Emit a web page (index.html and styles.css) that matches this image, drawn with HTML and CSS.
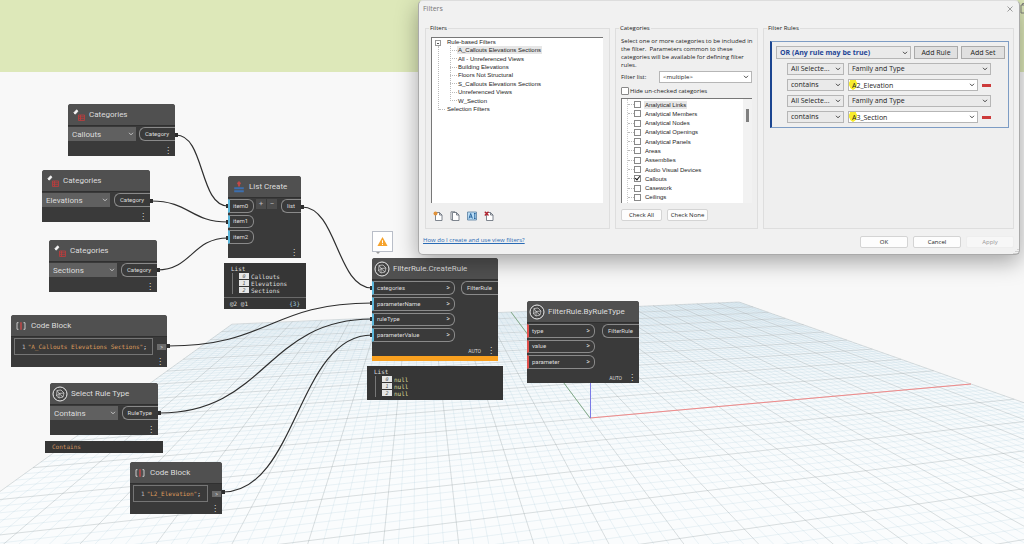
FILE: index.html
```html
<!DOCTYPE html>
<html lang="en">
<head>
<meta charset="utf-8">
<title>Filters</title>
<link rel="stylesheet" href="styles.css">
</head>
<body>
<main class="workspace">
  <div class="swatch"></div>
  <svg class="scene" id="grid" aria-hidden="true">
    <defs>
      <linearGradient id="floor" gradientUnits="userSpaceOnUse" x1="0" y1="302" x2="0" y2="480">
        <stop offset="0" stop-color="#ebf2f7"/><stop offset="0.5" stop-color="#f5f9fb"/><stop offset="1" stop-color="#fafcfd"/>
      </linearGradient>
    </defs>
  </svg>
  <svg class="scene wires" aria-hidden="true">
    <path d="M176 135C205 135 199 206 228 206M151 201C190 201 190 222 228 222M157 270C192 270 192 238 228 238M302 207C337 207 337 288 372 288M168 346C270 346 270 303 372 303M160 413C266 413 266 319 372 319M223 492C297 492 297 335 372 335"/>
    <path class="pins" d="M175 133h3v4h-3zM150 199h3v4h-3zM157 268h3v4h-3zM301 205h3v4h-3zM167 344h3v4h-3zM158 411h3v4h-3zM222 490h3v4h-3zM226 204h3v4h-3zM226 220h3v4h-3zM226 236h3v4h-3zM370 286h3v4h-3zM370 301h3v4h-3zM370 317h3v4h-3zM370 333h3v4h-3z"/>
  </svg>

  <svg width="0" height="0" class="defs" aria-hidden="true">
    <symbol id="i-cat" viewBox="0 0 12 12"><path d="M.8 3.800 3.600.8 5 2.200 2.200 5.200z" fill="#f8f8f8" stroke="#f8f8f8" stroke-width=".8"/><path d="M5.500 6h6v5.500h-6zM5.500 7.800h6M5.500 9.700h6M7.500 6v5.500" stroke="#c03c3c" stroke-width=".8" fill="none"/></symbol>
    <symbol id="i-code" viewBox="0 0 10 8"><path d="M2.500 .7H1v6.600h1.500M7.500 .7H9v6.600H7.500" stroke="#d5d5d5" stroke-width=".9" fill="none"/><path d="M5 .3v7.400" stroke="#e04545" stroke-width="1.200"/></symbol>
    <symbol id="i-dyn" viewBox="0 0 16 16"><circle cx="8" cy="8" r="7" fill="#454545" stroke="#eee" stroke-width="1"/><path d="M5 4.500 9 4l3 3-1 4-4 1-2.500-2zM5 4.500l2 3 5-.5M7 7.500l0 4.500M7 7.500 11 11M4.500 10 7 7.500" fill="none" stroke="#ddd" stroke-width=".7"/></symbol>
    <symbol id="i-list" viewBox="0 0 10 10"><path d="M5 .5v4M3.500 2h3" stroke="#c64848" stroke-width="1.500"/><path d="M1 6h8M1 8.500h8" stroke="#3d6fae" stroke-width="1.600"/></symbol>
    <symbol id="i-down" viewBox="0 0 6 4"><path d="M1 .8 3 2.800 5 .8" fill="none" stroke="currentColor" stroke-width=".8"/></symbol>
    <symbol id="i-page" viewBox="0 0 10 10"><path d="M2.500 1.500h4l2.500 2.500v5.500H2.500zM6.500 1.500V4H9" fill="#fff" stroke="#606873" stroke-width=".8"/></symbol>
  </svg>

  <section class="node n-callouts">
    <header><svg class="ico"><use href="#i-cat"/></svg><h2>Categories</h2></header>
    <div class="row"><label class="pick"><select aria-label="Callouts category"><option>Callouts</option></select><svg><use href="#i-down"/></svg></label><span class="port out">Category</span></div>
    <footer><b>⋮</b></footer>
  </section>
  <section class="node n-elevations">
    <header><svg class="ico"><use href="#i-cat"/></svg><h2>Categories</h2></header>
    <div class="row"><label class="pick"><select aria-label="Elevations category"><option>Elevations</option></select><svg><use href="#i-down"/></svg></label><span class="port out">Category</span></div>
    <footer><b>⋮</b></footer>
  </section>
  <section class="node n-sections">
    <header><svg class="ico"><use href="#i-cat"/></svg><h2>Categories</h2></header>
    <div class="row"><label class="pick"><select aria-label="Sections category"><option>Sections</option></select><svg><use href="#i-down"/></svg></label><span class="port out">Category</span></div>
    <footer><b>⋮</b></footer>
  </section>

  <section class="node n-list">
    <header><svg class="ico"><use href="#i-list"/></svg><h2>List Create</h2></header>
    <div class="row">
      <div class="ins"><span class="port in">item0</span><span class="port in">item1</span><span class="port in">item2</span></div>
      <div class="steps"><button aria-label="Add item">+</button><button aria-label="Remove item">−</button></div>
      <span class="port out">list</span>
    </div>
    <footer><b>⋮</b></footer>
  </section>
  <aside class="preview p-list">
    <p>List</p>
    <ol><li><i>0</i>Callouts</li><li><i>1</i>Elevations</li><li><i>2</i>Sections</li></ol>
    <div class="foot"><span>@2 @1</span><em>{3}</em></div>
  </aside>

  <section class="node n-code1">
    <header><svg class="ico"><use href="#i-code"/></svg><h2>Code Block</h2></header>
    <div class="row code"><code><i>1</i><span>"A_Callouts Elevations Sections"</span>;</code><button class="go" aria-label="Output">&gt;</button></div>
    <footer><b>⋮</b></footer>
  </section>
  <section class="node n-rule dyn">
    <header><svg class="ico"><use href="#i-dyn"/></svg><h2>Select Rule Type</h2></header>
    <div class="row"><label class="pick"><select aria-label="Rule type"><option>Contains</option></select><svg><use href="#i-down"/></svg></label><span class="port out">RuleType</span></div>
    <footer><b>⋮</b></footer>
  </section>
  <aside class="preview p-rule">Contains</aside>
  <section class="node n-code2">
    <header><svg class="ico"><use href="#i-code"/></svg><h2>Code Block</h2></header>
    <div class="row code"><code><i>1</i><span>"L2_Elevation"</span>;</code><button class="go" aria-label="Output">&gt;</button></div>
    <footer><b>⋮</b></footer>
  </section>

  <div class="warn"><svg viewBox="0 0 12 12"><path d="M6 1 11.500 11H.5z" fill="#f6a32c"/><path d="M6 4.500v3.500M6 8.800v1" stroke="#fff" stroke-width="1.100"/></svg></div>
  <section class="node n-create dyn">
    <header><svg class="ico"><use href="#i-dyn"/></svg><h2>FilterRule.CreateRule</h2></header>
    <div class="row">
      <div class="ins"><span class="port in">categories<b>&gt;</b></span><span class="port in">parameterName<b>&gt;</b></span><span class="port in">ruleType<b>&gt;</b></span><span class="port in">parameterValue<b>&gt;</b></span></div>
      <span class="port out">FilterRule</span>
    </div>
    <footer><span>AUTO</span><b>⋮</b></footer>
  </section>
  <aside class="preview p-create">
    <p>List</p>
    <ol class="nulls"><li><i>0</i>null</li><li><i>1</i>null</li><li><i>2</i>null</li></ol>
  </aside>
  <section class="node n-by dyn">
    <header><svg class="ico"><use href="#i-dyn"/></svg><h2>FilterRule.ByRuleType</h2></header>
    <div class="row">
      <div class="ins unset"><span class="port in">type<b>&gt;</b></span><span class="port in">value<b>&gt;</b></span><span class="port in">parameter<b>&gt;</b></span></div>
      <span class="port out">FilterRule</span>
    </div>
    <footer><span>AUTO</span><b>⋮</b></footer>
  </section>

  <div class="corner"><svg viewBox="0 0 5 12"><path d="M5 2H2v8h3M3.500 2V.5H5" fill="none" stroke="#777" stroke-width=".9"/></svg></div>

  <div class="dialog" role="dialog" aria-label="Filters">
    <div class="bar"><span>Filters</span><button class="close" aria-label="Close"><svg viewBox="0 0 8 8"><path d="M1.500 1.500 6.500 6.500M6.500 1.500 1.500 6.500" stroke="#777" stroke-width=".7"/></svg></button></div>
    <div class="groups">
      <fieldset class="group g-filters">
        <legend>Filters</legend>
        <div class="tree">
          <ul>
            <li class="root"><button class="fold" aria-label="Collapse"></button>Rule-based Filters
              <ul class="kids">
                <li><span class="on">A_Callouts Elevations Sections</span></li>
                <li><span>All - Unreferenced Views</span></li>
                <li><span>Building Elevations</span></li>
                <li><span>Floors Not Structural</span></li>
                <li><span>S_Callouts Elevations Sections</span></li>
                <li><span>Unreferenced Views</span></li>
                <li><span>W_Section</span></li>
              </ul>
            </li>
            <li class="last">Selection Filters</li>
          </ul>
        </div>
        <div class="tools">
          <button aria-label="New"><svg viewBox="0 0 10 10"><use href="#i-page"/><circle cx="2.500" cy="2.500" r="2" fill="#e0913a"/></svg></button>
          <button aria-label="Duplicate"><svg viewBox="0 0 10 10"><path d="M1 .8h4v8H1z" fill="#fff" stroke="#606873" stroke-width=".8"/><use href="#i-page"/></svg></button>
          <button aria-label="Rename"><svg viewBox="0 0 10 10"><path d="M.5 1h9v8h-9z" fill="#b9dcf5" stroke="#5b7fa0" stroke-width=".8"/><path d="M2 7.500 3.700 2.500 5.400 7.500M2.600 6h2.200M7 2.500h1.600M7.800 2.500v5M7 7.500h1.600" fill="none" stroke="#1d5c97" stroke-width=".9"/></svg></button>
          <button aria-label="Delete"><svg viewBox="0 0 10 10"><use href="#i-page"/><path d="M.8.8 4.500 4.500M4.500.8.8 4.500" stroke="#b3202c" stroke-width="1.300"/></svg></button>
        </div>
      </fieldset>

      <fieldset class="group g-cats">
        <legend>Categories</legend>
        <p class="hint">Select one or more categories to be included in<br>the filter.&nbsp; Parameters common to these<br>categories will be available for defining filter<br>rules.</p>
        <div class="line"><label for="flist">Filter list:</label><span class="combo white"><select id="flist"><option>&lt;multiple&gt;</option></select><svg><use href="#i-down"/></svg></span></div>
        <label class="hide"><input type="checkbox">Hide un-checked categories</label>
        <div class="cats">
          <ul>
            <li><label><input type="checkbox"><span class="on">Analytical Links</span></label></li>
            <li><label><input type="checkbox"><span>Analytical Members</span></label></li>
            <li><label><input type="checkbox"><span>Analytical Nodes</span></label></li>
            <li><label><input type="checkbox"><span>Analytical Openings</span></label></li>
            <li><label><input type="checkbox"><span>Analytical Panels</span></label></li>
            <li><label><input type="checkbox"><span>Areas</span></label></li>
            <li><label><input type="checkbox"><span>Assemblies</span></label></li>
            <li><label><input type="checkbox"><span>Audio Visual Devices</span></label></li>
            <li><label><input type="checkbox" checked><span>Callouts</span></label></li>
            <li><label><input type="checkbox"><span>Casework</span></label></li>
            <li><label><input type="checkbox"><span>Ceilings</span></label></li>
          </ul>
          <div class="scroll"><i></i></div>
        </div>
        <div class="checks"><button class="btn">Check All</button><button class="btn">Check None</button></div>
      </fieldset>

      <fieldset class="group g-rules">
        <legend>Filter Rules</legend>
        <div class="set">
          <div class="top"><span class="combo or"><select aria-label="Set operator"><option>OR (Any rule may be true)</option></select><svg><use href="#i-down"/></svg></span><button class="add">Add Rule</button><button class="add">Add Set</button></div>
          <div class="rule"><span class="combo"><select aria-label="Category 1"><option>All Selecte...</option></select><svg><use href="#i-down"/></svg></span><span class="combo wide"><select aria-label="Parameter 1"><option>Family and Type</option></select><svg><use href="#i-down"/></svg></span></div>
          <div class="rule"><span class="combo"><select aria-label="Operator 1"><option>contains</option></select><svg><use href="#i-down"/></svg></span><span class="combo white value"><input aria-label="Value 1" value="A2_Elevation"><svg><use href="#i-down"/></svg></span><button class="minus" aria-label="Remove rule 1"></button></div>
          <div class="rule"><span class="combo"><select aria-label="Category 2"><option>All Selecte...</option></select><svg><use href="#i-down"/></svg></span><span class="combo wide"><select aria-label="Parameter 2"><option>Family and Type</option></select><svg><use href="#i-down"/></svg></span></div>
          <div class="rule"><span class="combo"><select aria-label="Operator 2"><option>contains</option></select><svg><use href="#i-down"/></svg></span><span class="combo white value"><input aria-label="Value 2" value="A3_Section"><svg><use href="#i-down"/></svg></span><button class="minus" aria-label="Remove rule 2"></button></div>
        </div>
      </fieldset>
    </div>
    <div class="end"><a href="#help">How do I create and use view filters?</a><div class="acts"><button class="btn">OK</button><button class="btn">Cancel</button><button class="btn" disabled>Apply</button></div></div>
    <svg class="grip" viewBox="0 0 6 6"><path d="M5 1v.8M5 3v.8M5 5v.8M3 3v.8M3 5v.8M1 5v.8" stroke="#999" stroke-width=".9"/></svg>
  </div>
</main>
<script src="grid.js"></script>
</body>
</html>
```
FILE: grid.js
```js
// Ground plane: projects unit coordinates (u, v) onto the canvas.
const svg = document.getElementById('grid');
function at(u, v) {
  const w = 0.1876 * u + 0.862 * v + 1;
  return [(563.2 * u + 361.5 * v + 590) / w, (38 * u + 162.9 * v + 418) / w].map(n => n.toFixed(1)).join(' ');
}
function draw(d, cls) {
  const p = document.createElementNS('http://www.w3.org/2000/svg', 'path');
  p.setAttribute('d', d);
  p.setAttribute('class', cls);
  svg.appendChild(p);
}
const line = (a, b) => 'M' + at(...a) + 'L' + at(...b);
const near = -0.7;
draw('M' + [at(-1, near), at(-1, 1), at(1, 1), at(1, near)].join('L') + 'Z', 'floor');
let minor = '', major = '';
for (let i = -50; i <= 50; i++) {
  const t = i / 50;
  let d = line([t, near], [t, 1]);
  if (t >= near) d += line([-1, t], [1, t]);
  if (i % 5) minor += d; else major += d;
}
draw(minor, 'minor');
draw(major, 'major');
draw(line([0, 0], [0, 1]), 'axis-y');
draw(line([0, 0], [1, 0]), 'axis-x');
draw('M590.5 418V330', 'axis-z');
```
FILE: styles.css
```css
* { box-sizing: border-box; }
body { margin: 0; font-family: Roboto, "Liberation Sans", sans-serif; }
h2, p, ul, ol { margin: 0; padding: 0; }
ul, ol { list-style: none; }
button, select, input { font: inherit; color: inherit; margin: 0; padding: 0; border: 0; background: none; appearance: none; border-radius: 0; min-width: 0; }
.defs { position: absolute; }

.workspace { position: relative; min-height: 100vh; overflow: hidden; background: #f8f8f8; }
.swatch { height: 72px; background: #dde8b9; }
.scene { position: absolute; inset: 0; width: 100%; height: 100%; }
.floor { fill: url(#floor); }
.minor, .major { fill: none; stroke: #a4c8d6; stroke-opacity: .2; stroke-width: 1; }
.major { stroke: #8b979c; stroke-opacity: .3; }
.axis-x { stroke: #f08a8a; stroke-width: 1; }
.axis-y { stroke: #85ad8b; stroke-width: 1; }
.axis-z { stroke: #7b7be6; stroke-width: 1; }
.wires path { fill: none; stroke: #2e2e2e; stroke-width: 1.2; }
.wires .pins { fill: #2e2e2e; stroke: none; }

/* Graph nodes */
.node { position: absolute; display: flex; flex-direction: column; background: #3a3a3a; border-radius: 3px 3px 0 0; color: #ddd; font-size: 6px; }
.node header { display: flex; align-items: center; gap: 4px; height: 21px; padding-left: 5px; background: #505050; border-radius: 3px 3px 0 0; }
.node h2 { font-size: 8px; font-weight: 400; line-height: 12px; white-space: nowrap; }
.ico { width: 12px; height: 12px; flex: none; }
.dyn header { padding-left: 2px; gap: 3px; }
.dyn .ico { width: 16px; height: 16px; }
.row { display: flex; align-items: flex-start; justify-content: space-between; padding-top: 1px; border-top: 1px solid #303030; }
.pick { display: flex; align-items: center; position: relative; width: 68px; height: 14px; background: #606060; }
.pick select { width: 100%; height: 100%; padding-left: 4px; font-size: 8px; }
.pick svg, .combo svg { position: absolute; right: 2px; width: 6px; height: 4px; pointer-events: none; }
.port { display: flex; align-items: center; height: 14px; border: 1px solid #8a8a8a; line-height: 8px; white-space: nowrap; }
.out { padding: 0 6px 0 5px; border-right: 0; border-radius: 6px 0 0 6px; }
.ins { display: grid; grid-auto-rows: 1fr; gap: 2px; height: 45px; }
.in { height: auto; padding: 0 4px 0 3px; border-left: 2px solid #5cb8dc; border-radius: 0 6px 6px 0; justify-content: space-between; }
.in b { font-weight: 400; font-size: 7px; }
.unset .in { border-left-color: #e0504c; }
.node footer { display: flex; flex: 1; align-items: flex-end; justify-content: flex-end; gap: 6px; padding: 0 3px 1px; font-size: 5px; line-height: 8px; }
.node footer b { font: 8px/8px "DejaVu Sans", sans-serif; }
.steps { display: flex; gap: 1px; }
.steps button { width: 10px; height: 10px; background: #4c4c4c; font-size: 8px; line-height: 10px; color: #bbb; }
.n-callouts { left: 68px; top: 104px; width: 107px; height: 52px; }
.n-elevations { left: 42px; top: 170px; width: 108px; height: 52px; }
.n-sections { left: 49px; top: 240px; width: 108px; height: 52px; }
.n-list { left: 228px; top: 176px; width: 73px; height: 82px; }
.n-code1 { left: 11px; top: 315px; width: 156px; height: 52px; }
.n-rule { left: 50px; top: 383px; width: 108px; height: 52px; }
.n-code2 { left: 130px; top: 462px; width: 92px; height: 52px; }
.n-create { left: 372px; top: 258px; width: 126px; height: 103px; border-bottom: 5px solid #f9a01f; }
.n-by { left: 527px; top: 301px; width: 112px; height: 82px; }
.n-create .ins { width: 83px; height: 61px; }
.n-by .ins { width: 68px; }
.n-list .ins { width: 26px; }
.n-list .steps { flex: 1; padding-left: 2px; }
.n-code1 header, .n-code2 header { gap: 5px; }
.n-code1 .ico, .n-code2 .ico { width: 10px; height: 8px; }
.code { align-items: center; gap: 4px; padding: 1px 1px 0 3px; }
.code code { flex: 1; height: 17px; padding-left: 7px; border: 1px solid #757575; color: #eee; font: 6px/15px "DejaVu Sans Mono", "Liberation Mono", monospace; white-space: nowrap; }
.code i { font-style: normal; color: #bbb; padding-right: 2px; }
.code span { color: #dd9b5c; }
.go { width: 9px; height: 6px; background: #6b6b6b; font-size: 5px; line-height: 6px; }

.preview { position: absolute; background: #363636; color: #ddd; font: 6px/7px "DejaVu Sans Mono", "Liberation Mono", monospace; }
.preview p { padding: 2px 0 0 7px; line-height: 8px; }
.preview ol { margin-left: 8px; padding-left: 6px; border-left: 1px solid #777; }
.preview li { display: flex; gap: 2px; }
.preview li i { width: 10px; height: 6px; background: #e6e6e6; color: #555; font-size: 5px; line-height: 6px; text-align: center; }
.nulls { color: #dede96; }
.foot { display: flex; justify-content: space-between; margin-top: 3px; padding: 2px 6px; border-top: 1px solid #6a6a6a; }
.foot em { font-style: normal; color: #9ec7dd; }
.p-list { left: 224px; top: 263px; width: 82px; height: 46px; }
.p-rule { left: 45px; top: 441px; width: 118px; height: 12px; padding-left: 7px; line-height: 12px; color: #cf9360; }
.p-create { left: 367px; top: 366px; width: 136px; height: 34px; }
.warn { position: absolute; left: 372px; top: 231px; width: 21px; height: 21px; padding: 4px; border: 1px solid #b9bec8; background: #fff; }
.warn svg { display: block; width: 11px; height: 11px; }
.warn::after { content: ""; position: absolute; left: 3px; top: 20px; border: 2px solid transparent; border-top-color: #999; }
.corner { position: absolute; right: 0; top: 0; padding: 3px 0; }
.corner svg { display: block; width: 5px; height: 12px; }

/* Dialog */
.dialog { position: absolute; left: 418px; right: 4px; top: 0; height: 255px; padding: 0 6px; background: #f1f1f1; border: 1px solid #aaa; border-top-color: #ddd; border-radius: 5px; box-shadow: 0 7px 22px rgba(0,0,0,.34); color: #1c1c1c; font: 6px/8px "Open Sans", "Noto Sans", sans-serif; }
.bar { display: flex; justify-content: space-between; height: 23px; padding-top: 4px; margin: 0 -1px 0 -2px; color: #777; font-size: 7px; }
.close { width: 8px; height: 8px; }
.close svg { display: block; }
.groups { display: grid; grid-template-columns: 185px 143px 1fr; gap: 5px; margin-right: -1px; }
.group { min-width: 0; height: 205px; margin: 0; padding: 5px; border: 1px solid #dedede; background: #efefef; }
.group legend { padding: 0 1px; margin-left: -2px; height: 8px; }
.tree { height: 166px; border-top: 1px solid #777; border-left: 1px solid #777; background: #fff; margin-right: 1px; padding: 0 3px; font: 6px/8px "Liberation Sans", Arial, sans-serif; }
.root { position: relative; padding-left: 12px; }
.fold { position: absolute; left: 0; top: 2px; width: 6px; height: 6px; border: 1px solid #999; background: linear-gradient(#555, #555) center / 2px 1px no-repeat #fff; }
.root::before { content: ""; position: absolute; left: 3px; top: 8px; bottom: -5px; border-left: 1px dotted #bbb; }
.kids { display: grid; grid-auto-rows: 1fr; height: 59px; margin-left: 3px; position: relative; }
.kids::before { content: ""; position: absolute; left: 0; top: 0; bottom: 4px; border-left: 1px dotted #bbb; }
.kids li { display: flex; align-items: center; }
.kids li::before { content: ""; width: 7px; border-top: 1px dotted #bbb; }
.kids span { padding: 0 1px; }
.on { background: #e6e6e6; }
.last { display: flex; align-items: center; padding-left: 4px; }
.last::before { content: ""; width: 6px; margin-right: 2px; border-top: 1px dotted #bbb; }
.tools { display: flex; gap: 7px; padding: 8px 2px; }
.tools button, .tools svg { display: block; width: 10px; height: 10px; }

.hint { white-space: nowrap; }
.line { display: flex; align-items: center; justify-content: space-between; height: 12px; margin-top: 2px; }
.combo { position: relative; display: flex; align-items: center; height: 12px; border: 1px solid #b6b6b6; background: #eaeaea; }
.combo select, .combo input { width: 100%; height: 100%; padding-left: 3px; }
.white { background: #fff; }
.line .combo { width: 93px; }
.hide { display: flex; align-items: center; gap: 1px; height: 10px; margin: 3px 0 2px; }
input[type=checkbox] { flex: none; width: 7px; height: 7px; border: 1px solid #888; background: #fff; }
input[type=checkbox]:checked::after { content: ""; display: block; width: 2px; height: 4px; margin: -1px 0 0 1px; border: solid #111; border-width: 0 1px 1px 0; transform: rotate(40deg); }
.hide input { width: 8px; height: 8px; border-radius: 1px; }
.cats { display: flex; height: 105px; border-top: 1px solid #777; border-left: 1px solid #777; background: #fff; font: 6px/8px "Liberation Sans", Arial, sans-serif; }
.cats ul { flex: 1; display: grid; grid-auto-rows: 1fr; margin-left: 5px; padding: 1px 0; border-left: 1px dotted #ccc; }
.cats li { display: flex; align-items: center; }
.cats li::before { content: ""; width: 6px; border-top: 1px dotted #bbb; }
.cats label { display: flex; align-items: center; gap: 3px; }
.cats label span { padding: 0 1px; }
.scroll { width: 9px; padding: 10px 3px; background: #f2f2f2; }
.scroll i { display: block; height: 13px; background: #7f7f7f; }
.checks { display: flex; gap: 5px; padding-top: 6px; }
.btn { height: 12px; border: 1px solid #d4d4d4; border-radius: 2px; background: #fdfdfd; line-height: 8px; }
.btn:disabled { color: #999; background: #f7f7f7; border-color: #eee; }
.checks .btn { width: 41px; }

.set { display: grid; gap: 4px; margin: 4px -1px 0 1px; padding: 4px 3px 4px 4px; border: 1px solid #7d9cc4; border-left: 2px solid #1b4590; font-size: 7px; }
.top { display: flex; gap: 3px; }
.top .combo { flex: 1; height: 13px; }
.or select { color: #1f4696; font-weight: 700; }
.add { width: 44px; height: 13px; border: 1px solid #aaa; background: #e0e0e0; line-height: 9px; }
.rule { display: flex; align-items: center; gap: 4px; padding: 0 14px 0 11px; }
.rule .combo:first-child { width: 57px; }
.rule .wide, .rule .value { flex: 1; }
.value input { background: radial-gradient(ellipse 4px 6px at 4px 4px, #f7ec2e 90%, transparent); }
.minus { width: 9px; height: 3px; background: #cc3a3a; }

.end { display: flex; align-items: flex-start; justify-content: space-between; margin: 0 -1px 0 -2px; padding-top: 7px; }
.end a { color: #2a6bb5; }
.acts { display: flex; gap: 5px; }
.acts .btn { width: 48px; }
.grip { position: absolute; right: 0; bottom: 0; width: 6px; height: 6px; }
```
